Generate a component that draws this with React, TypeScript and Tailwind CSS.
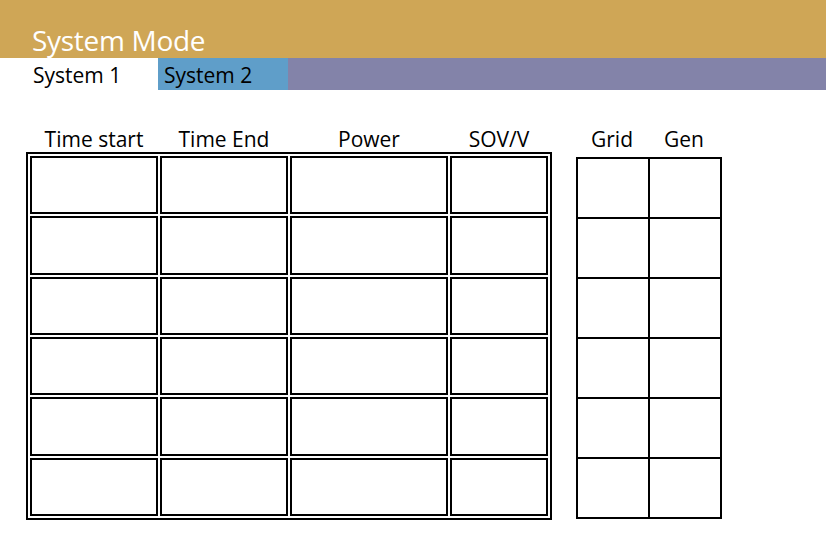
const leftHeaders = ['Time start', 'Time End', 'Power', 'SOV/V'];
const rightHeaders = ['Grid', 'Gen'];
const rows = [0, 1, 2, 3, 4, 5];

const leftCols = 'grid-cols-[128px_128px_158px_98px]';

export default function App() {
  return (
    <div className="w-[826px] h-[550px] bg-white overflow-hidden font-['Open_Sans',sans-serif] text-black">
      {/* header */}
      <div className="h-[58px] bg-[#cfa656] flex items-end pl-[32px] pb-[4px]">
        <h1 className="text-[28px] leading-none text-white tracking-[-0.3px]">System Mode</h1>
      </div>

      {/* tabs */}
      <div className="flex h-[32px]">
        <div className="w-[158px] pl-[33px] pt-[3px] flex items-center text-[21px] leading-none">System 1</div>
        <div className="w-[130px] bg-[#5f9ec9] pl-[6px] pt-[3px] flex items-center text-[21px] leading-none">
          System 2
        </div>
        <div className="flex-1 bg-[#8383a9]" />
      </div>

      {/* tables */}
      <div className="flex pl-[26px] pt-[36px] gap-[24px]">
        <div>
          <div className={`grid ${leftCols} gap-x-[2px] px-[4px] h-[26px] pt-[3px]`}>
            {leftHeaders.map(h => (
              <div key={h} className="text-center text-[21px] leading-none">
                {h}
              </div>
            ))}
          </div>
          <div
            className={`grid ${leftCols} grid-rows-6 gap-[2px] p-[2px] border-2 border-black h-[368px]`}
          >
            {rows.map(r =>
              leftHeaders.map(h => (
                <div key={`${r}-${h}`} className="border-2 border-black" />
              )),
            )}
          </div>
        </div>

        <div>
          <div className="grid grid-cols-[72px_72px] h-[31px] pt-[3px]">
            {rightHeaders.map(h => (
              <div key={h} className="text-center text-[21px] leading-none">
                {h}
              </div>
            ))}
          </div>
          <div className="grid grid-cols-[70px_70px] grid-rows-6 gap-[2px] bg-black border-2 border-black w-[146px] h-[362px]">
            {rows.map(r =>
              rightHeaders.map(h => <div key={`${r}-${h}`} className="bg-white" />),
            )}
          </div>
        </div>
      </div>
    </div>
  );
}
